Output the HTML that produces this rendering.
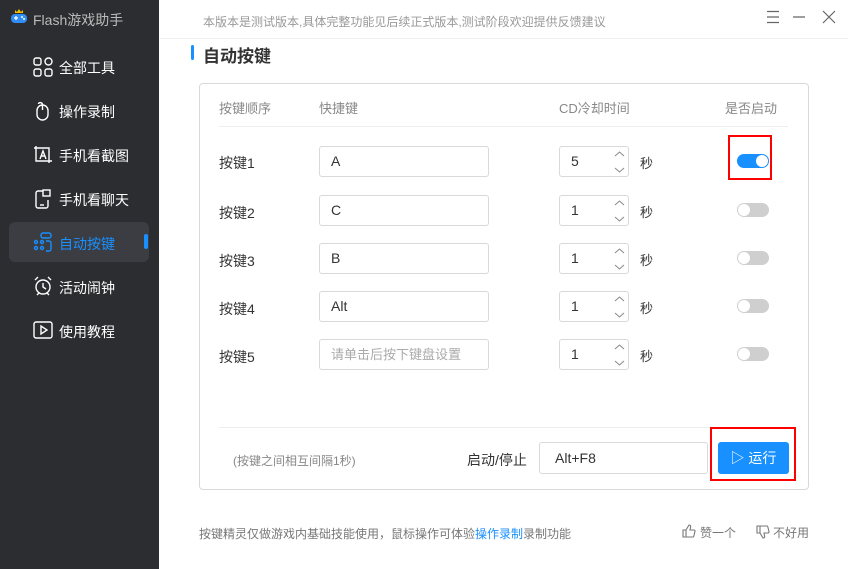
<!DOCTYPE html><html><head><meta charset="utf-8"><style>
*{margin:0;padding:0;box-sizing:border-box}
body{width:848px;height:569px;overflow:hidden;position:relative;background:#fff;font-family:"Liberation Sans","Noto Sans CJK SC",sans-serif;font-size:14px;color:#333}
.a{position:absolute}
.side{left:0;top:0;width:159px;height:569px;background:#2c2d31}
.nav{color:#fff;font-size:14px}
.ic{position:absolute;left:33px;width:20px;height:20px}
.inp{border:1px solid #d9d9d9;border-radius:3px;height:31px;padding-left:11px;line-height:29px;color:#333}
.tg{width:32px;height:14px;border-radius:7px;background:#cfcfcf}
.tg::after{content:"";position:absolute;left:1px;top:1px;width:12px;height:12px;border-radius:50%;background:#fff}
.tg.on{background:#1890ff}
.tg.on::after{left:19px}
.arr{position:absolute;right:3px;top:3px}
</style></head><body>
<div class="a side"></div>
<div class="a" style="left:10px;top:9px;width:18px;height:16px">
<svg width="18" height="16" viewBox="0 0 18 16"><path d="M5 1l2 2 2-3 2 3 2-2v3H5z" fill="#f5c000"/><rect x="1" y="5" width="16" height="9" rx="4" fill="#2f8df5"/><path d="M4 9h4M6 7v4" stroke="#fff" stroke-width="1.3"/><circle cx="12" cy="8" r="1" fill="#fff"/><circle cx="14" cy="10" r="1" fill="#fff"/></svg></div>
<div class="a" style="left:33px;top:10px;color:#bbb;font-size:14px">Flash游戏助手</div>
<div class="a" style="left:9px;top:222px;width:140px;height:40px;background:#3c3d43;border-radius:6px"></div>
<div class="a" style="left:144px;top:234px;width:4px;height:15px;background:#1890ff;border-radius:2px"></div>
<svg class="ic" style="top:57px" viewBox="0 0 20 20" fill="none" stroke="#fff" stroke-width="1.4"><rect x="1" y="1" width="7" height="7" rx="2"/><rect x="12" y="1" width="7" height="7" rx="3.5"/><rect x="1" y="12" width="7" height="7" rx="2"/><rect x="12" y="12" width="7" height="7" rx="2"/></svg>
<svg class="ic" style="top:101px" viewBox="0 0 20 20" fill="none" stroke="#fff" stroke-width="1.4"><rect x="4" y="4" width="11" height="15" rx="5.5"/><path d="M9.5 4v5M9.5 4c0-3-4-3-4-1"/></svg>
<svg class="ic" style="top:145px" viewBox="0 0 20 20" fill="none" stroke="#fff" stroke-width="1.4"><path d="M3 1v15h16M1 3h15v15"/><path d="M7 14l3-8 3 8M8 11h4"/></svg>
<svg class="ic" style="top:189px" viewBox="0 0 20 20" fill="none" stroke="#fff" stroke-width="1.4"><path d="M10 2H5a2 2 0 0 0-2 2v13a2 2 0 0 0 2 2h8a2 2 0 0 0 2-2v-6"/><rect x="10" y="1" width="7" height="6"/><path d="M7 16h4"/></svg>
<svg class="ic" style="top:232px" viewBox="0 0 20 20" fill="none" stroke="#1890ff" stroke-width="1.4"><rect x="8" y="1" width="10" height="5" rx="2"/><circle cx="3" cy="10" r="1.5"/><circle cx="3" cy="16" r="1.5"/><circle cx="9" cy="10" r="1.5"/><circle cx="9" cy="16" r="1.5"/><path d="M13 9h3a2 2 0 0 1 2 2v6a2 2 0 0 1-2 2h-3"/></svg>
<svg class="ic" style="top:276px" viewBox="0 0 20 20" fill="none" stroke="#fff" stroke-width="1.4"><circle cx="10" cy="11" r="7"/><path d="M10 7v4l3 2M2 4l3-3M18 4l-3-3M4 19l2-2M16 19l-2-2"/></svg>
<svg class="ic" style="top:320px" viewBox="0 0 20 20" fill="none" stroke="#fff" stroke-width="1.4"><rect x="1" y="2" width="18" height="16" rx="2"/><path d="M8 6v8l6-4z"/></svg>
<div class="a nav" style="left:59px;top:58px">全部工具</div>
<div class="a nav" style="left:59px;top:102px">操作录制</div>
<div class="a nav" style="left:59px;top:146px">手机看截图</div>
<div class="a nav" style="left:59px;top:190px">手机看聊天</div>
<div class="a nav" style="left:59px;top:234px;color:#1890ff">自动按键</div>
<div class="a nav" style="left:59px;top:278px">活动闹钟</div>
<div class="a nav" style="left:59px;top:322px">使用教程</div>

<div class="a" style="left:203px;top:13px;font-size:12px;color:#999">本版本是测试版本,具体完整功能见后续正式版本,测试阶段欢迎提供反馈建议</div>
<svg class="a" style="left:766px;top:10px" width="70" height="14" viewBox="0 0 70 14" fill="none" stroke="#666" stroke-width="1.2"><path d="M1 1.5h12M1 7h12M1 12.5h12M27 7h12M57 1l12 12M69 1L57 13"/></svg>
<div class="a" style="left:160px;top:38px;width:688px;height:1px;background:#f0f0f0"></div>
<div class="a" style="left:191px;top:45px;width:3px;height:15px;background:#1890ff;border-radius:2px"></div>
<div class="a" style="left:203px;top:42px;font-size:17px;font-weight:bold;color:#333">自动按键</div>

<div class="a" style="left:199px;top:83px;width:610px;height:407px;border:1px solid #d9d9d9;border-radius:4px"></div>
<div class="a" style="left:219px;top:98px;color:#888;font-size:13px">按键顺序</div>
<div class="a" style="left:319px;top:98px;color:#888;font-size:13px">快捷键</div>
<div class="a" style="left:559px;top:98px;color:#888;font-size:13px">CD冷却时间</div>
<div class="a" style="left:725px;top:98px;color:#888;font-size:13px">是否启动</div>
<div class="a" style="left:219px;top:126px;width:569px;height:1px;background:#eee"></div>

<div class="a" style="left:219px;top:153px">按键1</div><div class="a inp" style="left:319px;top:146px;width:170px">A</div>
<div class="a inp" style="left:559px;top:146px;width:70px">5<svg class="arr" width="11" height="24" viewBox="0 0 11 24" fill="none" stroke="#888"><path d="M1 6l4.5-4 4.5 4M1 18l4.5 4 4.5-4"/></svg></div><div class="a" style="left:640px;top:153px;font-size:13px">秒</div>
<div class="a tg on" style="left:737px;top:154px"></div>
<div class="a" style="left:728px;top:135px;width:44px;height:45px;border:2px solid #f00"></div>

<div class="a" style="left:219px;top:203px">按键2</div><div class="a inp" style="left:319px;top:195px;width:170px">C</div>
<div class="a inp" style="left:559px;top:195px;width:70px">1<svg class="arr" width="11" height="24" viewBox="0 0 11 24" fill="none" stroke="#888"><path d="M1 6l4.5-4 4.5 4M1 18l4.5 4 4.5-4"/></svg></div><div class="a" style="left:640px;top:202px;font-size:13px">秒</div><div class="a tg" style="left:737px;top:203px"></div>

<div class="a" style="left:219px;top:251px">按键3</div><div class="a inp" style="left:319px;top:243px;width:170px">B</div>
<div class="a inp" style="left:559px;top:243px;width:70px">1<svg class="arr" width="11" height="24" viewBox="0 0 11 24" fill="none" stroke="#888"><path d="M1 6l4.5-4 4.5 4M1 18l4.5 4 4.5-4"/></svg></div><div class="a" style="left:640px;top:250px;font-size:13px">秒</div><div class="a tg" style="left:737px;top:251px"></div>

<div class="a" style="left:219px;top:299px">按键4</div><div class="a inp" style="left:319px;top:291px;width:170px">Alt</div>
<div class="a inp" style="left:559px;top:291px;width:70px">1<svg class="arr" width="11" height="24" viewBox="0 0 11 24" fill="none" stroke="#888"><path d="M1 6l4.5-4 4.5 4M1 18l4.5 4 4.5-4"/></svg></div><div class="a" style="left:640px;top:298px;font-size:13px">秒</div><div class="a tg" style="left:737px;top:299px"></div>

<div class="a" style="left:219px;top:347px">按键5</div><div class="a inp" style="left:319px;top:339px;width:170px;color:#aaa;font-size:13px">请单击后按下键盘设置</div>
<div class="a inp" style="left:559px;top:339px;width:70px">1<svg class="arr" width="11" height="24" viewBox="0 0 11 24" fill="none" stroke="#888"><path d="M1 6l4.5-4 4.5 4M1 18l4.5 4 4.5-4"/></svg></div><div class="a" style="left:640px;top:346px;font-size:13px">秒</div><div class="a tg" style="left:737px;top:347px"></div>

<div class="a" style="left:219px;top:427px;width:569px;height:1px;background:#eee"></div>
<div class="a" style="left:233px;top:452px;color:#888;font-size:12px">(按键之间相互间隔1秒)</div>
<div class="a" style="left:467px;top:450px">启动/停止</div>
<div class="a inp" style="left:539px;top:442px;width:169px;height:32px;line-height:30px;padding-left:15px">Alt+F8</div>
<div class="a" style="left:718px;top:442px;width:71px;height:32px;background:#1890ff;border-radius:3px;color:#fff;line-height:32px;text-align:center">▷ 运行</div>
<div class="a" style="left:710px;top:427px;width:86px;height:54px;border:2px solid #f00"></div>

<div class="a" style="left:199px;top:525px;font-size:12px;color:#777">按键精灵仅做游戏内基础技能使用，鼠标操作可体验<span style="color:#1890ff">操作录制</span>录制功能</div>
<svg class="a" style="left:682px;top:524px" width="14" height="14" viewBox="0 0 14 14" fill="none" stroke="#777" stroke-width="1.1"><path d="M1 6h3v7H1zM4 6l3-5c1.5 0 2 1 1.5 2.5L8 6h4a1 1 0 0 1 1 1.2l-1.2 5A1 1 0 0 1 11 13H4"/></svg>
<div class="a" style="left:700px;top:524px;font-size:12px;color:#777">赞一个</div>
<svg class="a" style="left:756px;top:525px" width="14" height="14" viewBox="0 0 14 14" fill="none" stroke="#777" stroke-width="1.1"><path d="M1 1h3v7H1zM4 8l3 5c1.5 0 2-1 1.5-2.5L8 8h4a1 1 0 0 0 1-1.2l-1.2-5A1 1 0 0 0 11 1H4"/></svg>
<div class="a" style="left:773px;top:524px;font-size:12px;color:#777">不好用</div>
</body></html>
